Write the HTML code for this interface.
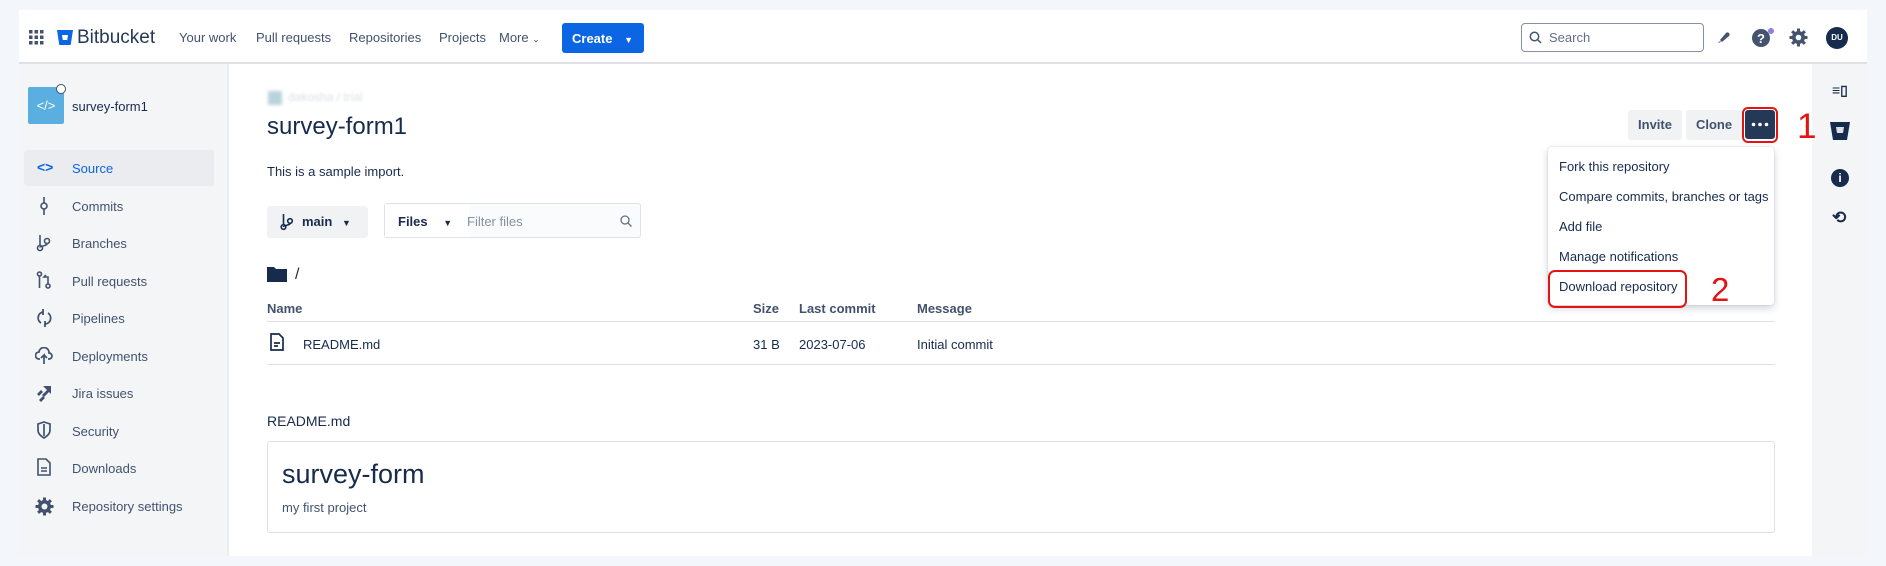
<!DOCTYPE html>
<html><head><meta charset="utf-8"><style>
*{margin:0;padding:0;box-sizing:border-box}
body{width:1886px;height:566px;background:#f3f6fa;font-family:"Liberation Sans",sans-serif;color:#172b4d;position:relative;overflow:hidden}
.a{position:absolute;white-space:nowrap}
.frame{left:19px;top:10px;width:1848px;height:546px;background:#fff}
.nav{left:19px;top:10px;width:1848px;height:54px;border-bottom:2px solid #dfe1e6;background:#fff}
.nt{font-size:13px;color:#42526e;top:30px}
.side{left:19px;top:64px;width:210px;height:492px;background:#f4f5f7;border-right:2px solid #ebecf0}
.si{left:72px;font-size:13px;color:#42526e}
.rs{left:1812px;top:64px;width:55px;height:492px;background:#f4f5f7}
.th{font-size:13px;font-weight:bold;color:#42526e;top:301px}
.td{font-size:13px;top:337px;color:#172b4d}
.mi{left:1559px;font-size:13px;color:#172b4d}
</style></head><body>
<div class="a frame"></div>
<div class="a nav"></div>
<svg class="a" style="left:29px;top:30px" width="15" height="15"><g fill="#42526e"><rect x="0" y="0" width="3.5" height="3.5"/><rect x="5.5" y="0" width="3.5" height="3.5"/><rect x="11" y="0" width="3.5" height="3.5"/><rect x="0" y="5.5" width="3.5" height="3.5"/><rect x="5.5" y="5.5" width="3.5" height="3.5"/><rect x="11" y="5.5" width="3.5" height="3.5"/><rect x="0" y="11" width="3.5" height="3.5"/><rect x="5.5" y="11" width="3.5" height="3.5"/><rect x="11" y="11" width="3.5" height="3.5"/></g></svg>
<svg class="a" style="left:57px;top:30px" width="16" height="15"><path d="M0 0h16l-2.3 15H2.3z" fill="#0c66e4"/><path d="M5 5h6l-.8 5H5.8z" fill="#fff"/></svg>
<div class="a" style="left:77px;top:27px;font-size:19px;color:#253858">Bitbucket</div>
<div class="a nt" style="left:179px">Your work</div>
<div class="a nt" style="left:256px">Pull requests</div>
<div class="a nt" style="left:349px">Repositories</div>
<div class="a nt" style="left:439px">Projects</div>
<div class="a nt" style="left:499px">More <span style="font-size:9px">&#8964;</span></div>
<div class="a" style="left:562px;top:23px;width:82px;height:30px;background:#0c66e4;border-radius:3px;color:#fff;font-size:13px;font-weight:bold;padding:8px 0 0 10px">Create <span style="margin-left:8px;font-size:9px">&#9660;</span></div>
<div class="a" style="left:1521px;top:23px;width:183px;height:29px;border:1.5px solid #8590a2;border-radius:4px"></div>
<svg class="a" style="left:1529px;top:31px" width="13" height="13"><circle cx="5.5" cy="5.5" r="4.2" stroke="#44546f" stroke-width="1.5" fill="none"/><path d="M8.5 8.5l3.5 3.5" stroke="#44546f" stroke-width="1.5"/></svg>
<div class="a" style="left:1549px;top:30px;font-size:13px;color:#626f86">Search</div>
<svg class="a" style="left:1717px;top:30px" width="16" height="16"><path d="M3 10l6-7c2-2 5 1 3 3l-7 6z M1 13l3-1-1-1z" fill="#44546f"/></svg>
<svg class="a" style="left:1752px;top:28px" width="24" height="22"><circle cx="9" cy="10" r="9" fill="#44546f"/><text x="9" y="15" font-size="13" font-weight="bold" fill="#fff" text-anchor="middle" font-family="Liberation Sans">?</text><circle cx="19" cy="3" r="3" fill="#8f7ee7"/></svg>
<svg class="a" style="left:1789px;top:28px" width="19" height="19"><g fill="#44546f"><circle cx="9.5" cy="9.5" r="6.5"/><rect x="8" y="0.5" width="3" height="4"/><rect x="8" y="14.5" width="3" height="4"/><rect x="0.5" y="8" width="4" height="3"/><rect x="14.5" y="8" width="4" height="3"/><rect x="8" y="0.5" width="3" height="4" transform="rotate(45 9.5 9.5)"/><rect x="8" y="14.5" width="3" height="4" transform="rotate(45 9.5 9.5)"/><rect x="0.5" y="8" width="4" height="3" transform="rotate(45 9.5 9.5)"/><rect x="14.5" y="8" width="4" height="3" transform="rotate(45 9.5 9.5)"/></g><circle cx="9.5" cy="9.5" r="2.8" fill="#fff"/></svg>
<div class="a" style="left:1826px;top:27px;width:22px;height:22px;border-radius:50%;background:#172b4d;color:#fff;font-size:8px;font-weight:bold;text-align:center;line-height:22px">DU</div>

<div class="a side"></div>
<div class="a" style="left:28px;top:87px;width:36px;height:37px;background:#5aafe0;border-radius:2px;color:#fff;font-size:13px;text-align:center;line-height:37px">&lt;/&gt;</div>
<div class="a" style="left:56px;top:84px;width:10px;height:10px;border-radius:50%;background:#fff;border:1.5px solid #42526e"></div>
<div class="a" style="left:72px;top:99px;font-size:13px;color:#172b4d">survey-form1</div>
<div class="a" style="left:24px;top:150px;width:190px;height:36px;background:#ebecf0;border-radius:3px"></div>
<div class="a" style="left:37px;top:159px;font-size:14px;color:#0c66e4;font-weight:bold">&lt;&gt;</div>
<div class="a si" style="top:161px;color:#0c66e4">Source</div>
<div class="a si" style="top:199px">Commits</div>
<div class="a si" style="top:236px">Branches</div>
<div class="a si" style="top:274px">Pull requests</div>
<div class="a si" style="top:311px">Pipelines</div>
<div class="a si" style="top:349px">Deployments</div>
<div class="a si" style="top:386px">Jira issues</div>
<div class="a si" style="top:424px">Security</div>
<div class="a si" style="top:461px">Downloads</div>
<div class="a si" style="top:499px">Repository settings</div>
<svg class="a" style="left:36px;top:196px" width="16" height="20"><g stroke="#42526e" stroke-width="1.6" fill="none"><circle cx="8" cy="10" r="3"/><path d="M8 1v6M8 13v6"/></g></svg>
<svg class="a" style="left:36px;top:234px" width="16" height="18"><g stroke="#42526e" stroke-width="1.6" fill="none"><circle cx="4" cy="14" r="2.5"/><circle cx="11" cy="7" r="2.5"/><path d="M4 1v10.5M11 9.5c0 3-7 2-7 4"/></g></svg>
<svg class="a" style="left:36px;top:271px" width="16" height="18"><g stroke="#42526e" stroke-width="1.6" fill="none"><circle cx="3.5" cy="3" r="2"/><circle cx="12" cy="15" r="2"/><path d="M3.5 5v12M12 13V6H8l2-2"/></g></svg>
<svg class="a" style="left:36px;top:309px" width="16" height="18"><g stroke="#42526e" stroke-width="1.8" fill="none"><path d="M12 4a6 6 0 0 1-3 11M5 14A6 6 0 0 1 7 3"/><path d="M7 0v6M9 12v6"/></g></svg>
<svg class="a" style="left:35px;top:347px" width="18" height="18"><g stroke="#42526e" stroke-width="1.7" fill="none"><path d="M5 12H4a3.5 3.5 0 0 1 0-7 5 5 0 0 1 10 1 3 3 0 0 1 0 6h-1"/><path d="M9 17V8l-3 3M9 8l3 3"/></g></svg>
<svg class="a" style="left:35px;top:384px" width="18" height="18"><g fill="#42526e"><path d="M8 2h8v8l-2-2-5 5-2-2 5-5z"/><path d="M2 10l4-4 2 2-4 4zM4 16l4-4 2 2-4 4z"/></g></svg>
<svg class="a" style="left:36px;top:421px" width="16" height="18"><path d="M8 1l6 2v6c0 4-3 6-6 8-3-2-6-4-6-8V3z M8 3v12" stroke="#42526e" stroke-width="1.7" fill="none"/></svg>
<svg class="a" style="left:37px;top:458px" width="14" height="18"><path d="M1 1h8l4 4v12H1z M4 10h6M4 13h6" stroke="#42526e" stroke-width="1.6" fill="none"/></svg>
<svg class="a" style="left:35px;top:497px" width="19" height="19"><g fill="#42526e"><circle cx="9.5" cy="9.5" r="6.5"/><rect x="8" y="0.5" width="3" height="4"/><rect x="8" y="14.5" width="3" height="4"/><rect x="0.5" y="8" width="4" height="3"/><rect x="14.5" y="8" width="4" height="3"/><rect x="8" y="0.5" width="3" height="4" transform="rotate(45 9.5 9.5)"/><rect x="8" y="14.5" width="3" height="4" transform="rotate(45 9.5 9.5)"/><rect x="0.5" y="8" width="4" height="3" transform="rotate(45 9.5 9.5)"/><rect x="14.5" y="8" width="4" height="3" transform="rotate(45 9.5 9.5)"/></g><circle cx="9.5" cy="9.5" r="3" fill="#f4f5f7"/></svg>

<div class="a rs"></div>
<div class="a" style="left:1832px;top:82px;font-size:14px;font-weight:bold;color:#172b4d">≡▯</div>
<svg class="a" style="left:1830px;top:121px" width="20" height="20"><path d="M0 1h20l-3 18H3z" fill="#172b4d"/><path d="M6 6h8l-1 6H7z" fill="#fff" opacity=".85"/></svg>
<div class="a" style="left:1831px;top:169px;width:18px;height:18px;border-radius:50%;background:#172b4d;color:#fff;font-size:12px;font-weight:bold;text-align:center;line-height:18px">i</div>
<div class="a" style="left:1832px;top:208px;font-size:17px;color:#172b4d;font-weight:bold">⟲</div>

<div class="a" style="left:268px;top:91px;width:14px;height:14px;background:#b9d3dc;filter:blur(1.5px)"></div>
<div class="a" style="left:288px;top:90px;font-size:12px;color:#dde0e6;filter:blur(1px)">dakosha / trial</div>
<div class="a" style="left:267px;top:113px;font-size:24px;color:#172b4d">survey-form1</div>
<div class="a" style="left:267px;top:164px;font-size:13px;color:#172b4d">This is a sample import.</div>
<div class="a" style="left:267px;top:206px;width:101px;height:32px;background:#f1f2f4;border-radius:3px"></div>
<svg class="a" style="left:280px;top:213px" width="14" height="18"><g stroke="#172b4d" stroke-width="1.6" fill="none"><circle cx="3.5" cy="14" r="2.3"/><circle cx="10" cy="8" r="2.3"/><path d="M3.5 1v10.5M10 10.5c0 2-6.5 1.5-6.5 3.5"/></g></svg>
<div class="a" style="left:302px;top:214px;font-size:13px;font-weight:bold">main <span style="font-size:9px;margin-left:6px">&#9660;</span></div>
<div class="a" style="left:384px;top:203px;width:257px;height:35px;border:1.5px solid #dfe1e6;border-radius:3px;background:#fafbfc"></div>
<div class="a" style="left:385px;top:204px;width:84px;height:33px;background:#fff"></div>
<div class="a" style="left:398px;top:214px;font-size:13px;font-weight:bold">Files <span style="font-size:9px;margin-left:12px">&#9660;</span></div>
<div class="a" style="left:467px;top:214px;font-size:13px;color:#8590a2">Filter files</div>
<svg class="a" style="left:620px;top:215px" width="12" height="12"><circle cx="5" cy="5" r="4" stroke="#626f86" stroke-width="1.3" fill="none"/><path d="M8 8l3.5 3.5" stroke="#626f86" stroke-width="1.3"/></svg>
<svg class="a" style="left:267px;top:266px" width="20" height="16"><path d="M0 1h7l2 2h11v13H0z" fill="#172b4d"/></svg>
<div class="a" style="left:295px;top:266px;font-size:16px">/</div>
<div class="a th" style="left:267px">Name</div>
<div class="a th" style="left:753px">Size</div>
<div class="a th" style="left:799px">Last commit</div>
<div class="a th" style="left:917px">Message</div>
<div class="a" style="left:267px;top:321px;width:1508px;height:1px;background:#dfe1e6"></div>
<svg class="a" style="left:270px;top:333px" width="14" height="18"><path d="M1 1h8l4 4v12H1z M4 10h6M4 13h4" stroke="#172b4d" stroke-width="1.7" fill="none"/></svg>
<div class="a td" style="left:303px">README.md</div>
<div class="a td" style="left:753px">31 B</div>
<div class="a td" style="left:799px">2023-07-06</div>
<div class="a td" style="left:917px">Initial commit</div>
<div class="a" style="left:267px;top:364px;width:1508px;height:1px;background:#dfe1e6"></div>
<div class="a" style="left:267px;top:413px;font-size:14px">README.md</div>
<div class="a" style="left:267px;top:441px;width:1508px;height:92px;border:1.5px solid #dfe1e6;border-radius:3px"></div>
<div class="a" style="left:282px;top:459px;font-size:27px">survey-form</div>
<div class="a" style="left:282px;top:500px;font-size:13px;color:#42526e">my first project</div>

<div class="a" style="left:1628px;top:110px;width:54px;height:30px;background:#f1f2f4;border-radius:3px;font-size:13px;font-weight:bold;color:#42526e;text-align:center;line-height:30px">Invite</div>
<div class="a" style="left:1686px;top:110px;width:56px;height:30px;background:#f1f2f4;border-radius:3px;font-size:13px;font-weight:bold;color:#42526e;text-align:center;line-height:30px">Clone</div>
<div class="a" style="left:1745px;top:110px;width:30px;height:29px;background:#253858;border-radius:3px"></div>
<svg class="a" style="left:1751px;top:122px" width="18" height="5"><g fill="#fff"><circle cx="2.5" cy="2.5" r="1.8"/><circle cx="9" cy="2.5" r="1.8"/><circle cx="15.5" cy="2.5" r="1.8"/></g></svg>
<div class="a" style="left:1742px;top:107px;width:36px;height:36px;border:2.5px solid #e51414;border-radius:6px"></div>
<div class="a" style="left:1797px;top:107px;font-size:35px;color:#e51414">1</div>
<div class="a" style="left:1548px;top:147px;width:226px;height:158px;background:#fff;border-radius:3px;box-shadow:0 3px 8px rgba(9,30,66,.2),0 0 1px rgba(9,30,66,.3)"></div>
<div class="a mi" style="top:159px">Fork this repository</div>
<div class="a mi" style="top:189px">Compare commits, branches or tags</div>
<div class="a mi" style="top:219px">Add file</div>
<div class="a mi" style="top:249px">Manage notifications</div>
<div class="a mi" style="top:279px">Download repository</div>
<div class="a" style="left:1548px;top:270px;width:139px;height:38px;border:2.5px solid #e51414;border-radius:7px"></div>
<div class="a" style="left:1711px;top:271px;font-size:33px;color:#e51414">2</div>
</body></html>
